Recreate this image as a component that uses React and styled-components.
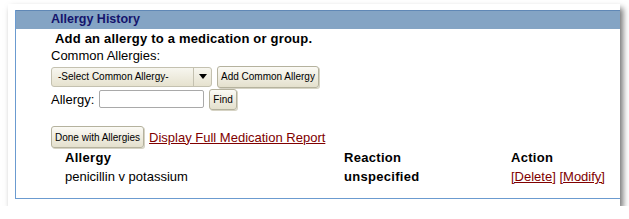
import styled, { createGlobalStyle } from "styled-components";

const Global = createGlobalStyle`
  body {
    margin: 0;
    background: #ffffff;
    font-family: "Liberation Sans", Arial, sans-serif;
  }
`;

const Page = styled.div`
  padding: 4px 0 0 8px;
`;

const Paper = styled.div`
  width: 612px;
  height: 202px;
  background: #ffffff;
  box-shadow: 3px 4px 6px rgba(0, 0, 0, 0.55);
  padding: 6px 0 0 7px;
  box-sizing: border-box;
`;

const Panel = styled.div`
  border-left: 1px solid #6b9bd0;
  border-bottom: 1px solid #6b9bd0;
  height: 189px;
  box-sizing: border-box;
`;

const Header = styled.div`
  height: 19px;
  background: #84a4c4;
  border-top: 1px solid #6088b6;
  box-sizing: border-box;
  padding-left: 35px;
  font-family: "Liberation Sans", Arial, sans-serif;
  font-size: 12.5px;
  font-weight: bold;
  line-height: 17px;
  color: #14146c;
`;

const Body = styled.div`
  padding-left: 35px;
  font-size: 13px;
  color: #000;
`;

const Title = styled.div`
  padding-left: 4px;
  height: 19px;
  line-height: 19px;
  font-weight: bold;
  font-size: 13px;
  letter-spacing: 0.2px;
`;

const Label = styled.div`
  height: 16px;
  line-height: 16px;
`;

const Row = styled.div`
  display: flex;
  align-items: center;
  gap: ${(p) => p.$gap || 5}px;
  margin-top: ${(p) => p.$top || 0}px;
  height: ${(p) => p.$h || 22}px;
`;

const Select = styled.div`
  width: 161px;
  height: 20px;
  box-sizing: border-box;
  border: 1px solid #c4c1b0;
  border-radius: 3px;
  background: linear-gradient(#f7f6ef, #e6e2cf);
  display: flex;
  font-family: "Liberation Sans", Tahoma, sans-serif;
  font-size: 10px;
  color: #000;
`;

const SelectText = styled.div`
  flex: 1;
  padding-left: 6px;
  line-height: 18px;
`;

const Arrow = styled.div`
  width: 17px;
  border-left: 1px solid #c4c1b0;
  display: flex;
  align-items: center;
  justify-content: center;
`;

const Button = styled.button`
  height: ${(p) => p.$h || 22}px;
  box-sizing: border-box;
  padding: 0 3px;
  border: 1px solid #b5b29e;
  border-radius: 3px;
  background: linear-gradient(#fbfaf5, #e4e0cd);
  font-family: "Liberation Sans", Tahoma, sans-serif;
  font-size: 10px;
  color: #000;
  box-shadow: 1px 1px 0 #d6d3c4;
`;

const Input = styled.input`
  width: 105px;
  height: 18px;
  box-sizing: border-box;
  border: 1px solid #a9a9a9;
  border-radius: 2px;
`;

const Link = styled.a`
  color: #800000;
  text-decoration: underline;
  font-size: 13px;
  cursor: pointer;
`;

const Table = styled.div`
  display: grid;
  grid-template-columns: 279px 167px 1fr;
  padding-left: 14px;
  font-size: 13px;
`;

const Cell = styled.div`
  height: 19px;
  line-height: 19px;
  font-weight: ${(p) => (p.$bold ? "bold" : "normal")};
  letter-spacing: ${(p) => (p.$bold ? "0.3px" : "0")};
`;

export default function App() {
  return (
    <>
      <Global />
      <Page>
        <Paper>
          <Panel>
            <Header>Allergy History</Header>
            <Body>
              <Title>Add an allergy to a medication or group.</Title>
              <Label>Common Allergies:</Label>
              <Row $top={1} $h={23}>
                <Select>
                  <SelectText>-Select Common Allergy-</SelectText>
                  <Arrow>
                    <svg width="8" height="5" viewBox="0 0 8 5">
                      <path d="M0 0h8L4 5z" fill="#000" />
                    </svg>
                  </Arrow>
                </Select>
                <Button>Add Common Allergy</Button>
              </Row>
              <Row $gap={5}>
                <span>Allergy:</span>
                <Input />
                <Button $h={21}>Find</Button>
              </Row>
              <Row $top={16} $gap={5}>
                <Button>Done with Allergies</Button>
                <Link>Display Full Medication Report</Link>
              </Row>
              <Table>
                <Cell $bold>Allergy</Cell>
                <Cell $bold>Reaction</Cell>
                <Cell $bold>Action</Cell>
                <Cell>penicillin v potassium</Cell>
                <Cell $bold>unspecified</Cell>
                <Cell>
                  <Link>[Delete]</Link> <Link>[Modify]</Link>
                </Cell>
              </Table>
            </Body>
          </Panel>
        </Paper>
      </Page>
    </>
  );
}
